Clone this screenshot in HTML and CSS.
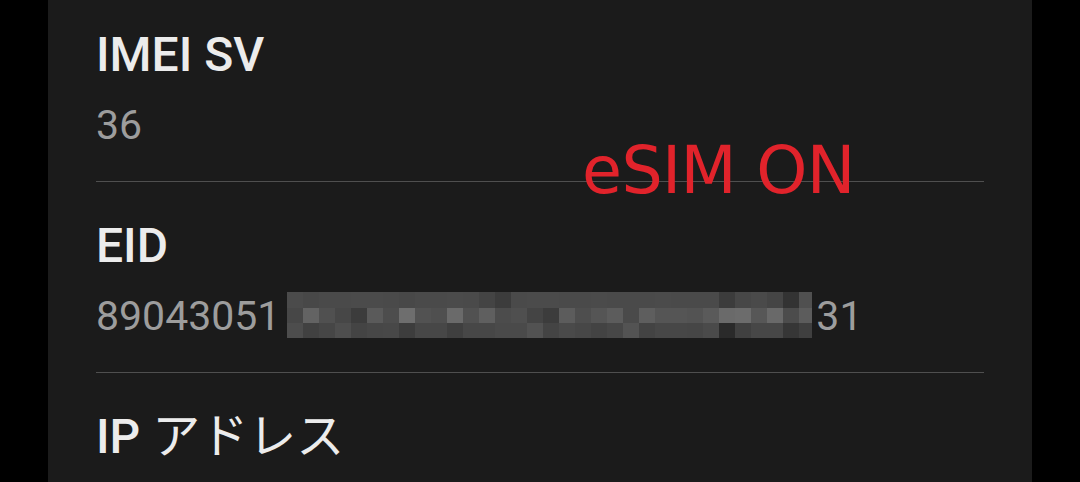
FILE: index.html
```html
<!DOCTYPE html>
<html lang="ja">
<head>
<meta charset="utf-8">
<title>Status</title>
<link rel="stylesheet" href="styles.css">
</head>
<body>
<div class="screen">
  <div class="panel">
    <div class="list">
      <div class="item">
        <div class="title">IMEI SV</div>
        <div class="value">36</div>
      </div>
      <div class="item">
        <div class="title">EID</div>
        <div class="value">89043051<svg class="mosaic" width="525" height="46" viewBox="0 0 525 46" shape-rendering="crispEdges" aria-hidden="true">
<rect x="0" y="0" width="16" height="16" fill="#4b4b4b"/><rect x="0" y="16" width="16" height="15" fill="#474747"/><rect x="0" y="31" width="16" height="15" fill="#4d4d4d"/>
<rect x="16" y="0" width="16" height="16" fill="#484848"/><rect x="16" y="16" width="16" height="15" fill="#636363"/><rect x="16" y="31" width="16" height="15" fill="#414141"/>
<rect x="32" y="0" width="16" height="16" fill="#4a4a4a"/><rect x="32" y="16" width="16" height="15" fill="#505050"/><rect x="32" y="31" width="16" height="15" fill="#464646"/>
<rect x="48" y="0" width="16" height="16" fill="#4a4a4a"/><rect x="48" y="16" width="16" height="15" fill="#474747"/><rect x="48" y="31" width="16" height="15" fill="#4e4e4e"/>
<rect x="64" y="0" width="16" height="16" fill="#4b4b4b"/><rect x="64" y="16" width="16" height="15" fill="#3c3c3c"/><rect x="64" y="31" width="16" height="15" fill="#444444"/>
<rect x="80" y="0" width="16" height="16" fill="#4b4b4b"/><rect x="80" y="16" width="16" height="15" fill="#5a5a5a"/><rect x="80" y="31" width="16" height="15" fill="#474747"/>
<rect x="96" y="0" width="16" height="16" fill="#4a4a4a"/><rect x="96" y="16" width="16" height="15" fill="#4d4d4d"/><rect x="96" y="31" width="16" height="15" fill="#484848"/>
<rect x="112" y="0" width="16" height="16" fill="#484848"/><rect x="112" y="16" width="16" height="15" fill="#6e6e6e"/><rect x="112" y="31" width="16" height="15" fill="#3d3d3d"/>
<rect x="128" y="0" width="16" height="16" fill="#4a4a4a"/><rect x="128" y="16" width="16" height="15" fill="#525252"/><rect x="128" y="31" width="16" height="15" fill="#474747"/>
<rect x="144" y="0" width="16" height="16" fill="#4a4a4a"/><rect x="144" y="16" width="16" height="15" fill="#4f4f4f"/><rect x="144" y="31" width="16" height="15" fill="#474747"/>
<rect x="160" y="0" width="16" height="16" fill="#4b4b4b"/><rect x="160" y="16" width="16" height="15" fill="#6a6a6a"/><rect x="160" y="31" width="16" height="15" fill="#3f3f3f"/>
<rect x="176" y="0" width="16" height="16" fill="#4a4a4a"/><rect x="176" y="16" width="16" height="15" fill="#515151"/><rect x="176" y="31" width="16" height="15" fill="#474747"/>
<rect x="192" y="0" width="16" height="16" fill="#444444"/><rect x="192" y="16" width="16" height="15" fill="#5f5f5f"/><rect x="192" y="31" width="16" height="15" fill="#474747"/>
<rect x="208" y="0" width="16" height="16" fill="#3c3c3c"/><rect x="208" y="16" width="16" height="15" fill="#4c4c4c"/><rect x="208" y="31" width="16" height="15" fill="#4a4a4a"/>
<rect x="224" y="0" width="16" height="16" fill="#4a4a4a"/><rect x="224" y="16" width="16" height="15" fill="#4f4f4f"/><rect x="224" y="31" width="16" height="15" fill="#4a4a4a"/>
<rect x="240" y="0" width="16" height="16" fill="#4b4b4b"/><rect x="240" y="16" width="16" height="15" fill="#444444"/><rect x="240" y="31" width="16" height="15" fill="#525252"/>
<rect x="256" y="0" width="16" height="16" fill="#4b4b4b"/><rect x="256" y="16" width="16" height="15" fill="#3c3c3c"/><rect x="256" y="31" width="16" height="15" fill="#444444"/>
<rect x="272" y="0" width="16" height="16" fill="#4a4a4a"/><rect x="272" y="16" width="16" height="15" fill="#5c5c5c"/><rect x="272" y="31" width="16" height="15" fill="#4a4a4a"/>
<rect x="288" y="0" width="16" height="16" fill="#4a4a4a"/><rect x="288" y="16" width="16" height="15" fill="#4e4e4e"/><rect x="288" y="31" width="16" height="15" fill="#474747"/>
<rect x="304" y="0" width="16" height="16" fill="#4b4b4b"/><rect x="304" y="16" width="16" height="15" fill="#555555"/><rect x="304" y="31" width="16" height="15" fill="#434343"/>
<rect x="320" y="0" width="16" height="16" fill="#4a4a4a"/><rect x="320" y="16" width="16" height="15" fill="#5c5c5c"/><rect x="320" y="31" width="16" height="15" fill="#474747"/>
<rect x="336" y="0" width="16" height="16" fill="#4a4a4a"/><rect x="336" y="16" width="16" height="15" fill="#4a4a4a"/><rect x="336" y="31" width="16" height="15" fill="#535353"/>
<rect x="352" y="0" width="16" height="16" fill="#4a4a4a"/><rect x="352" y="16" width="16" height="15" fill="#5e5e5e"/><rect x="352" y="31" width="16" height="15" fill="#434343"/>
<rect x="368" y="0" width="16" height="16" fill="#4b4b4b"/><rect x="368" y="16" width="16" height="15" fill="#555555"/><rect x="368" y="31" width="16" height="15" fill="#474747"/>
<rect x="384" y="0" width="16" height="16" fill="#4a4a4a"/><rect x="384" y="16" width="16" height="15" fill="#555555"/><rect x="384" y="31" width="16" height="15" fill="#474747"/>
<rect x="400" y="0" width="16" height="16" fill="#4a4a4a"/><rect x="400" y="16" width="16" height="15" fill="#535353"/><rect x="400" y="31" width="16" height="15" fill="#464646"/>
<rect x="416" y="0" width="16" height="16" fill="#4a4a4a"/><rect x="416" y="16" width="16" height="15" fill="#5a5a5a"/><rect x="416" y="31" width="16" height="15" fill="#4a4a4a"/>
<rect x="432" y="0" width="16" height="16" fill="#3c3c3c"/><rect x="432" y="16" width="16" height="15" fill="#6a6a6a"/><rect x="432" y="31" width="16" height="15" fill="#2a2a2a"/>
<rect x="448" y="0" width="16" height="16" fill="#474747"/><rect x="448" y="16" width="16" height="15" fill="#6c6c6c"/><rect x="448" y="31" width="16" height="15" fill="#404040"/>
<rect x="464" y="0" width="16" height="16" fill="#4a4a4a"/><rect x="464" y="16" width="16" height="15" fill="#575757"/><rect x="464" y="31" width="16" height="15" fill="#474747"/>
<rect x="480" y="0" width="16" height="16" fill="#454545"/><rect x="480" y="16" width="16" height="15" fill="#696969"/><rect x="480" y="31" width="16" height="15" fill="#474747"/>
<rect x="496" y="0" width="16" height="16" fill="#333333"/><rect x="496" y="16" width="16" height="15" fill="#4c4c4c"/><rect x="496" y="31" width="16" height="15" fill="#363636"/>
<rect x="512" y="0" width="13" height="16" fill="#505050"/><rect x="512" y="16" width="13" height="15" fill="#5c5c5c"/><rect x="512" y="31" width="13" height="15" fill="#3f3f3f"/>
</svg>31</div>
      </div>
      <div class="item">
        <div class="title">IP <span class="jp">アドレス</span></div>
      </div>
    </div>
    <div class="stamp">eSIM ON</div>
  </div>
</div>
</body>
</html>
```

FILE: styles.css
```css
html, body {
  margin: 0;
  padding: 0;
  background: #000;
  height: 100%;
  overflow: hidden;
}

.screen {
  height: 482px;
  padding: 0 48px;
  background: #000;
}

.panel {
  position: relative;
  height: 482px;
  background: #1b1b1b;
  padding: 0 48px;
  overflow: hidden;
}

.list {
  margin-top: -9px;
}

.item {
  padding: 36px 0 32px;
  border-bottom: 1px solid #4f4f4f;
}

.item:last-child {
  border-bottom: none;
}

.title {
  font-family: Roboto, "Noto Sans CJK JP", sans-serif;
  font-weight: 500;
  font-size: 48px;
  line-height: 56px;
  color: #ececec;
}

.jp {
  font-weight: 400;
}

.value {
  margin-top: 18px;
  font-family: Roboto, sans-serif;
  font-weight: 400;
  font-size: 41px;
  line-height: 48px;
  color: #9d9d9d;
  white-space: nowrap;
}

.mosaic {
  display: inline-block;
  vertical-align: -8px;
  margin: 0 4px 0 7px;
}

.stamp {
  position: absolute;
  left: 534px;
  top: 133px;
  font-family: "DejaVu Sans", sans-serif;
  font-size: 65px;
  line-height: 76px;
  letter-spacing: -0.6px;
  color: #e1232b;
  white-space: nowrap;
}
```
